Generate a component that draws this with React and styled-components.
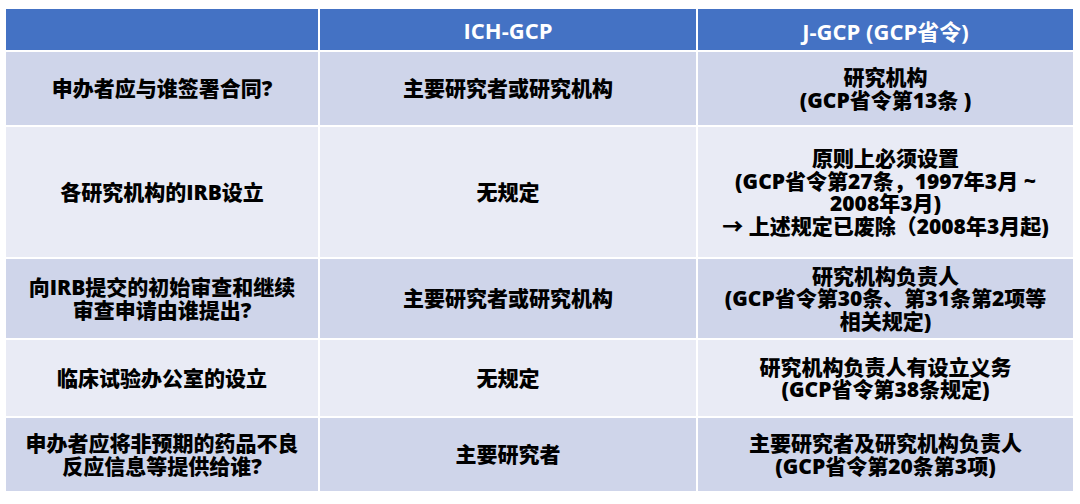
import styled, { createGlobalStyle } from "styled-components";

const GlobalStyle = createGlobalStyle`
  html, body {
    margin: 0;
    padding: 0;
    background: #ffffff;
  }
  body {
    font-family: "Open Sans", "Noto Sans CJK SC", sans-serif;
  }
`;

const Page = styled.div`
  width: 1080px;
  height: 504px;
  box-sizing: border-box;
  padding: 9px 7px 0 6px;
  background: #ffffff;
`;

const Table = styled.div`
  display: grid;
  grid-template-columns: 312px 376px 375px;
  grid-template-rows: 41px 73px 130px 79px 76px 73px;
  gap: 2px;
  background: #ffffff;
`;

const HeadCell = styled.div`
  background: #4472c4;
  color: #ffffff;
  font-size: 22px;
  font-weight: 700;
  display: flex;
  align-items: center;
  justify-content: center;
`;

const Cell = styled.div`
  background: ${(p) => (p.$odd ? "#cfd5ea" : "#e9ebf5")};
  color: #000000;
  font-size: 21px;
  font-weight: 900;
  line-height: 22.5px;
  display: flex;
  flex-direction: column;
  align-items: center;
  justify-content: center;
  text-align: center;
  white-space: nowrap;
`;

const rows = [
  {
    q: ["申办者应与谁签署合同?"],
    ich: ["主要研究者或研究机构"],
    j: ["研究机构", "(GCP省令第13条 )"],
  },
  {
    q: ["各研究机构的IRB设立"],
    ich: ["无规定"],
    j: [
      "原则上必须设置",
      "(GCP省令第27条，1997年3月 ~",
      "2008年3月)",
      "→ 上述规定已废除（2008年3月起)",
    ],
  },
  {
    q: ["向IRB提交的初始审查和继续", "审查申请由谁提出?"],
    ich: ["主要研究者或研究机构"],
    j: ["研究机构负责人", "(GCP省令第30条、第31条第2项等", "相关规定)"],
  },
  {
    q: ["临床试验办公室的设立"],
    ich: ["无规定"],
    j: ["研究机构负责人有设立义务", "(GCP省令第38条规定)"],
  },
  {
    q: ["申办者应将非预期的药品不良", "反应信息等提供给谁?"],
    ich: ["主要研究者"],
    j: ["主要研究者及研究机构负责人", "(GCP省令第20条第3项)"],
  },
];

function Lines({ lines }) {
  return lines.map((l, i) => <span key={i}>{l}</span>);
}

export default function App() {
  return (
    <Page>
      <GlobalStyle />
      <Table>
        <HeadCell />
        <HeadCell>ICH-GCP</HeadCell>
        <HeadCell>J-GCP (GCP省令)</HeadCell>
        {rows.map((r, i) => {
          const odd = i % 2 === 0;
          return [
            <Cell key={`q${i}`} $odd={odd}>
              <Lines lines={r.q} />
            </Cell>,
            <Cell key={`i${i}`} $odd={odd}>
              <Lines lines={r.ich} />
            </Cell>,
            <Cell key={`j${i}`} $odd={odd}>
              <Lines lines={r.j} />
            </Cell>,
          ];
        })}
      </Table>
    </Page>
  );
}
